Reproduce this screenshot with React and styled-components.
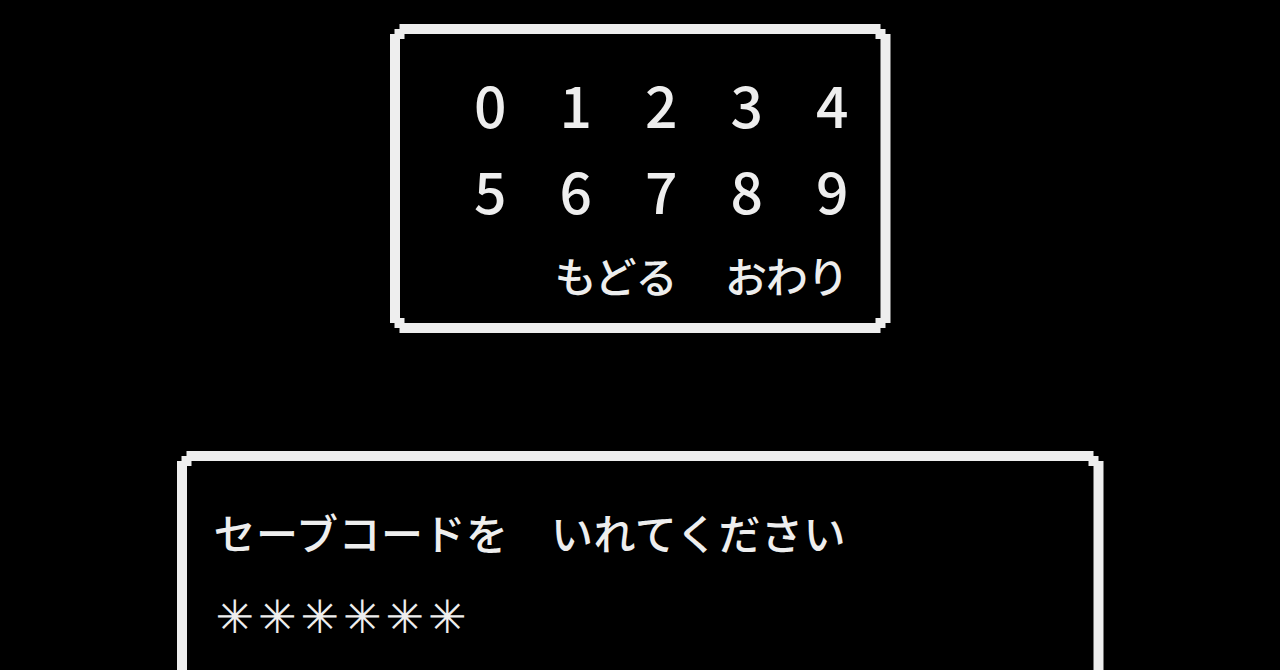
import React from 'react';
import styled, { createGlobalStyle } from 'styled-components';

const GlobalStyle = createGlobalStyle`
  html, body {
    margin: 0;
    padding: 0;
    background: #000;
  }
  body {
    font-family: "Noto Sans CJK JP", "Noto Sans", sans-serif;
    font-weight: 500;
    color: #eeeeee;
  }
`;

const Screen = styled.div`
  width: 1280px;
  height: 670px;
  overflow: hidden;
  display: flex;
  flex-direction: column;
  align-items: center;
  padding-top: 24px;
  gap: 118px;
  box-sizing: border-box;
  background: #000;
`;

// white frame with stepped pixel corners
const Window = styled.div`
  flex: none;
  width: ${(p) => p.$w}px;
  height: ${(p) => p.$h}px;
  box-sizing: border-box;
  padding: 10px;
  background: #eeeeee;
  display: flex;
  clip-path: polygon(
    10px 0, calc(100% - 10px) 0, calc(100% - 10px) 5px, calc(100% - 5px) 5px,
    calc(100% - 5px) 10px, 100% 10px, 100% calc(100% - 10px), calc(100% - 5px) calc(100% - 10px),
    calc(100% - 5px) calc(100% - 5px), calc(100% - 10px) calc(100% - 5px), calc(100% - 10px) 100%,
    10px 100%, 10px calc(100% - 5px), 5px calc(100% - 5px), 5px calc(100% - 10px),
    0 calc(100% - 10px), 0 10px, 5px 10px, 5px 5px, 10px 5px
  );
`;

const Panel = styled.div`
  flex: 1;
  background: #000;
  box-sizing: border-box;
  padding: ${(p) => p.$pad};
  clip-path: polygon(
    5px 0, calc(100% - 5px) 0, calc(100% - 5px) 5px, 100% 5px,
    100% calc(100% - 5px), calc(100% - 5px) calc(100% - 5px), calc(100% - 5px) 100%,
    5px 100%, 5px calc(100% - 5px), 0 calc(100% - 5px), 0 5px, 5px 5px
  );
`;

const Keypad = styled.div`
  display: grid;
  grid-template-columns: repeat(5, 85.5px);
  grid-auto-rows: 85.5px;
`;

const Key = styled.div`
  grid-column: ${(p) => (p.$start ? `${p.$start} / span ${p.$span}` : 'auto')};
  display: flex;
  align-items: center;
  justify-content: center;
  white-space: nowrap;
  font-size: 57px;
  line-height: 1;
`;

const Word = styled(Key)`
  font-size: 42px;
  letter-spacing: -1px;
  padding-right: 6px;
`;

const Message = styled.div`
  font-size: 42px;
  line-height: 87px;
  letter-spacing: 0.5px;
  white-space: pre;
`;

const Stars = styled.div`
  display: flex;
  height: 87px;
  align-items: center;
  margin-top: -2px;
`;

const Star = styled.span`
  width: 42.5px;
  text-align: center;
  font-family: "DejaVu Sans", sans-serif;
  font-weight: bold;
  font-size: 46px;
  line-height: 1;
`;

const digits = ['0', '1', '2', '3', '4', '5', '6', '7', '8', '9'];

export default function App() {
  return (
    <>
      <GlobalStyle />
      <Screen>
        <Window $w={501} $h={309}>
          <Panel $pad="27px 0 0 48px">
            <Keypad>
              {digits.map((d) => (
                <Key key={d}>{d}</Key>
              ))}
              <Word $start={2} $span={2}>もどる</Word>
              <Word $start={4} $span={2}>おわり</Word>
            </Keypad>
          </Panel>
        </Window>
        <Window $w={927} $h={280}>
          <Panel $pad="27px 0 0 27px">
            <Message>セーブコードを　いれてください</Message>
            <Stars>
              {[0, 1, 2, 3, 4, 5].map((i) => (
                <Star key={i}>{'\u2733\uFE0E'}</Star>
              ))}
            </Stars>
          </Panel>
        </Window>
      </Screen>
    </>
  );
}
